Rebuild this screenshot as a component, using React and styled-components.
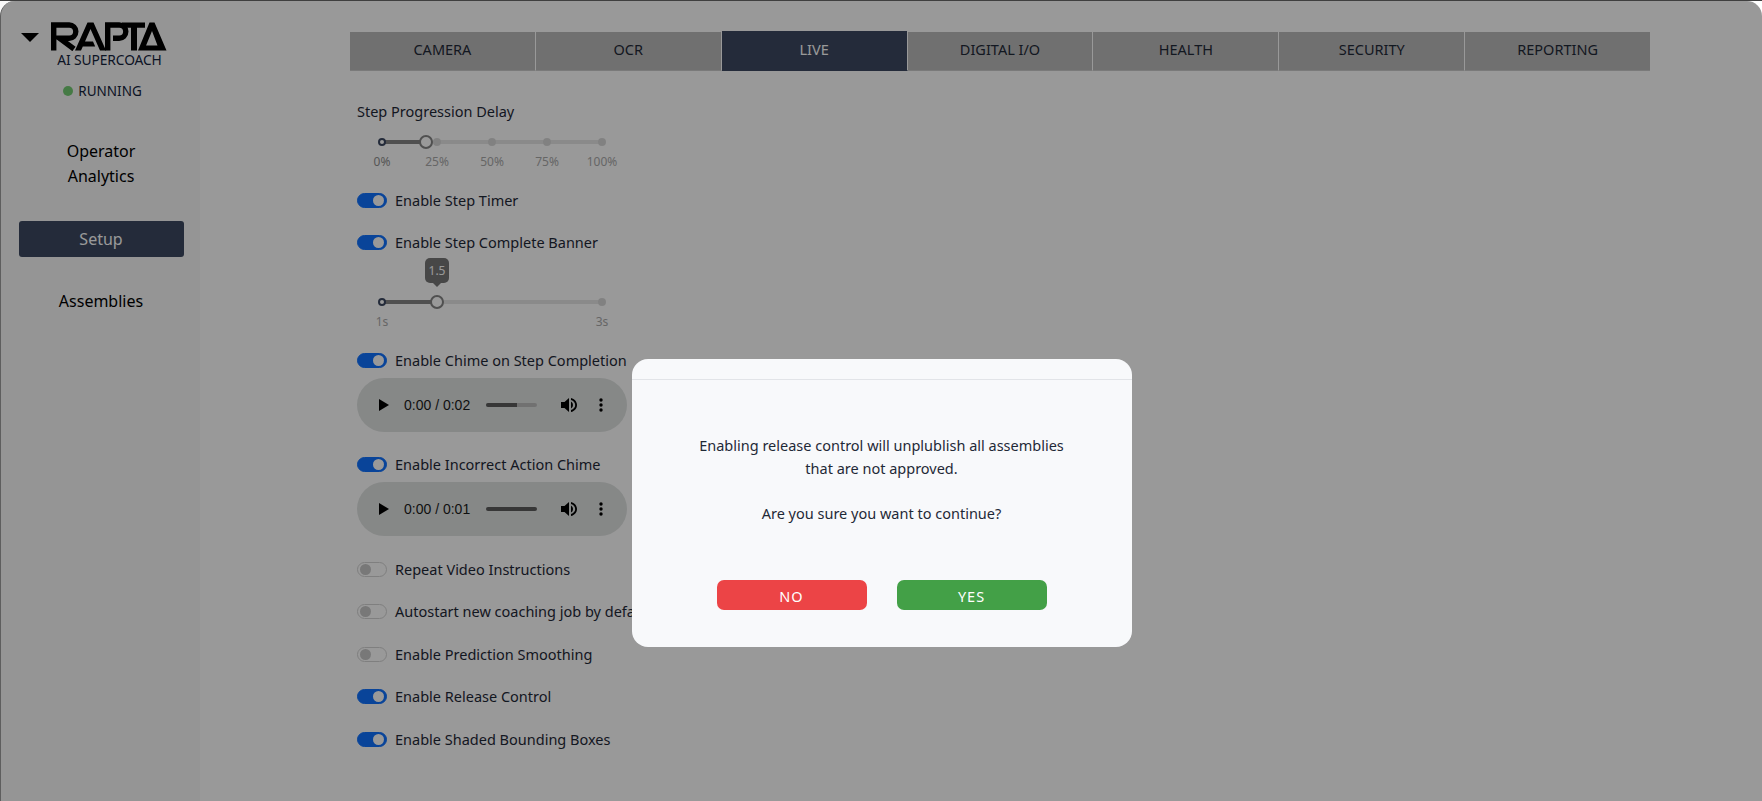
import React from "react";
import styled, { createGlobalStyle } from "styled-components";

const Global = createGlobalStyle`
  html, body { margin: 0; padding: 0; width: 100%; height: 100%; background: #fff; overflow: hidden; }
  body { font-family: "Noto Sans", "Open Sans", sans-serif; color: #111827; }
  * { box-sizing: border-box; }
`;

const Page = styled.div`
  position: relative;
  width: 1762px;
  height: 801px;
  display: flex;
  overflow: hidden;
  background: #fff;
  border-top: 1px solid #3f3f3f;
`;
const Sidebar = styled.aside`
  width: 200px;
  flex: none;
  padding-left: 2px;
  background: #f9f9f9;
  display: flex;
  flex-direction: column;
  align-items: center;
`;
const Brand = styled.div`
  width: 100%;
  display: flex;
  padding: 21px 0 0 19px;
  height: 50px;
  align-items: flex-start;
  gap: 12px;
`;
const Caret = styled.div`
  width: 0;
  height: 0;
  margin-top: 11px;
  border-left: 9px solid transparent;
  border-right: 9px solid transparent;
  border-top: 9px solid #000;
`;
const Tagline = styled.div`
  font-size: 13.8px;
  line-height: 18px;
  height: 18px;
  letter-spacing: -0.1px;
  color: #14233c;
  margin: 0 0 0 17px;
  width: 100%;
  text-align: center;
  white-space: nowrap;
`;
const Status = styled.div`
  display: flex;
  align-items: center;
  gap: 5px;
  margin: 12px 0 0 3px;
  font-size: 13.5px;
  line-height: 20px;
  color: #14233c;
`;
const Dot = styled.span`
  width: 10px;
  height: 10px;
  border-radius: 50%;
  background: #74cc74;
`;
const NavItem = styled.div`
  width: 165px;
  margin-top: ${(p) => p.$top}px;
  padding: ${(p) => (p.$active ? "6px" : "0")} 20px;
  height: ${(p) => (p.$active ? "36px" : "auto")};
  border-radius: 3px;
  text-align: center;
  font-size: 16px;
  line-height: 25px;
  background: ${(p) => (p.$active ? "#3c4961" : "transparent")};
  color: ${(p) => (p.$active ? "#fff" : "#000")};
`;
const Main = styled.main`
  flex: 1;
  padding: 30px 0 0 150px;
`;
const Tabs = styled.div`
  width: 1300px;
  height: 40px;
  display: flex;
  align-items: flex-end;
`;
const Tab = styled.div`
  flex: 1;
  height: ${(p) => (p.$active ? "40px" : "39px")};
  display: flex;
  align-items: center;
  justify-content: center;
  background: ${(p) => (p.$active ? "#3c4961" : "#bbb")};
  color: ${(p) => (p.$active ? "#fff" : "#1f2937")};
  border-right: 1px solid #fff;
  border-bottom: 1px solid ${(p) => (p.$active ? "#3c4961" : "#ccc")};
  font-size: 14.5px;
  padding-bottom: ${(p) => (p.$active ? "3px" : "5px")};
  &:last-child { border-right: none; }
`;
const Settings = styled.div`
  padding: 29px 0 0 7px;
  width: 500px;
`;
const Title = styled.div`
  font-size: 14.5px;
  line-height: 22px;
  margin-bottom: 1px;
  color: #1f2937;
  white-space: nowrap;
`;
const SliderBox = styled.div`
  position: relative;
  width: 220px;
  height: 50px;
  margin-left: 25px;
  margin-top: ${(p) => p.$top || 0}px;
`;
const Rail = styled.div`
  position: absolute;
  left: 0;
  right: 0;
  top: 17px;
  height: 4px;
  border-radius: 2px;
  background: #e6e6e6;
`;
const Fill = styled.div`
  position: absolute;
  left: 0;
  top: 0;
  height: 4px;
  border-radius: 2px;
  background: #858585;
`;
const Mark = styled.div`
  position: absolute;
  top: -2px;
  width: 8px;
  height: 8px;
  margin-left: -4px;
  border-radius: 50%;
  background: ${(p) => (p.$first ? "#fff" : "#d8d8d8")};
  border: 2px solid ${(p) => (p.$first ? "#3c4961" : "#d8d8d8")};
`;
const Handle = styled.div`
  position: absolute;
  top: -5px;
  width: 14px;
  height: 14px;
  margin-left: -7px;
  border-radius: 50%;
  background: #fff;
  border: 2px solid #858585;
`;
const MarkLabel = styled.div`
  position: absolute;
  top: 30px;
  transform: translateX(-50%);
  font-size: 12px;
  line-height: 18px;
  color: ${(p) => (p.$first ? "#8f8f8f" : "#aaa")};
  white-space: nowrap;
`;
const Tip = styled.div`
  position: absolute;
  top: -42px;
  width: 24px;
  height: 25px;
  margin-left: -12px;
  border-radius: 5px;
  background: #777;
  color: #fff;
  font-size: 12px;
  line-height: 25px;
  text-align: center;
  &::after {
    content: "";
    position: absolute;
    left: 8px;
    bottom: -4px;
    border-left: 4px solid transparent;
    border-right: 4px solid transparent;
    border-top: 4px solid #777;
  }
`;
const Row = styled.div`
  display: flex;
  align-items: center;
  gap: 8px;
  height: 22px;
  margin-top: ${(p) => p.$top || 0}px;
  font-size: 14.5px;
  color: #1f2937;
  white-space: nowrap;
`;
const Switch = styled.div`
  flex: none;
  width: 30px;
  height: 15px;
  border-radius: 8px;
  display: flex;
  align-items: center;
  justify-content: ${(p) => (p.$on ? "flex-end" : "flex-start")};
  padding: 0 2px;
  background: ${(p) => (p.$on ? "#0f72ff" : "#fff")};
  border: 1px solid ${(p) => (p.$on ? "#0f72ff" : "#d4d4d4")};
`;
const Knob = styled.div`
  width: 11px;
  height: 11px;
  border-radius: 50%;
  background: ${(p) => (p.$on ? "#fff" : "#c8c8c8")};
`;
const AudioBar = styled.div`
  width: 270px;
  height: 54px;
  margin-top: 7px;
  border-radius: 27px;
  background: #e0e3e2;
  display: flex;
  align-items: center;
  padding-left: 22px;
  color: #1b1b1b;
`;
const Time = styled.span`
  font-family: "Liberation Sans", Arial, sans-serif;
  font-size: 14px;
  width: 82px;
  margin-left: 15px;
  white-space: nowrap;
`;
const Progress = styled.div`
  width: 51px;
  height: 4px;
  border-radius: 2px;
  background: #bdbdbd;
  overflow: hidden;
`;
const ProgressFill = styled.div`
  height: 100%;
  background: #5c5c5c;
`;
const AudioIcons = styled.div`
  display: flex;
  align-items: center;
  gap: 22px;
  margin-left: 24px;
`;
const Backdrop = styled.div`
  position: absolute;
  inset: 0;
  display: flex;
  justify-content: center;
  align-items: flex-start;
  padding-top: 358px;
  background: rgba(0, 0, 0, 0.4);
  border-left: 1px solid #5e5e5e;
  border-radius: 15px 15px 0 0;
`;
const Modal = styled.div`
  width: 500px;
  height: 288px;
  background: #f8f9fb;
  border-radius: 16px;
  display: flex;
  flex-direction: column;
`;
const ModalHead = styled.div`
  height: 21px;
  flex: none;
  border-bottom: 1px solid #e2e4e8;
`;
const ModalBody = styled.div`
  padding-top: 54px;
  height: 200px;
  text-align: center;
  font-size: 14.5px;
  line-height: 22.5px;
  color: #1f2937;
`;
const ModalActions = styled.div`
  display: flex;
  justify-content: center;
  gap: 30px;
`;
const ActionButton = styled.button`
  width: 150px;
  height: 30px;
  border: none;
  border-radius: 7px;
  background: ${(p) => p.$bg};
  color: #fff;
  font-family: inherit;
  font-size: 14.5px;
  letter-spacing: 1px;
  padding: 1px 0 0;
`;

const Logo = () => (
  <svg width="116" height="29" viewBox="0 0 116 29" fill="none">
    <path d="M2.7 28.5V3h15.500a6.600 6.600 0 0 1 0 13.200H8.500L23 27" stroke="#000" strokeWidth="5.4" />
    <path d="M24 28.500 36.500.5h6L55 28.500h-6L39.500 7 34 19.500h8l2.200 5H31.800L30 28.500z" fill="#000" />
    <path d="M56.700 28.500V3h11.500a6.600 6.600 0 0 1 0 13.200H62" stroke="#000" strokeWidth="5.4" />
    <path d="M71 .5h23v5.300h-8V28.500h-6V5.800h-9z" fill="#000" />
    <path d="M87 28.500 98.500.5h5l12 28H91l2-5h13.500L101 9 93 28.500z" fill="#000" />
  </svg>
);

const Play = () => (
  <svg width="10" height="12" viewBox="0 0 10 12" fill="#000"><path d="M0 0v12l10-6z" /></svg>
);
const Volume = () => (
  <svg width="16" height="16" viewBox="0 0 16 16" fill="#000">
    <path d="M0 5v6h3.500L8 15V1L3.500 5z" />
    <path d="M10 4.400v7.200A4 4 0 0 0 12 8a4 4 0 0 0-2-3.600z" />
    <path d="M10 .9v2c2.600.8 4.200 2.800 4.200 5.100s-1.600 4.300-4.200 5.100v2c3.600-.9 6-3.700 6-7.100S13.600 1.800 10 .9z" />
  </svg>
);
const Kebab = () => (
  <svg width="4" height="14" viewBox="0 0 4 14" fill="#000">
    <circle cx="2" cy="2" r="1.700" /><circle cx="2" cy="7" r="1.700" /><circle cx="2" cy="12" r="1.700" />
  </svg>
);

const Slider = ({ value, marks, labels, top, tip }) => (
  <SliderBox $top={top}>
    <Rail>
      <Fill style={{ width: `${value}%` }} />
      {marks.map((m, i) => (
        <Mark key={m} $first={i === 0} style={{ left: `${m}%` }} />
      ))}
      <Handle style={{ left: `${value}%` }} />
      {tip && <Tip style={{ left: `${value}%` }}>{tip}</Tip>}
    </Rail>
    {labels.map((l, i) => (
      <MarkLabel key={l} $first={i === 0 && marks.length > 2} style={{ left: `${marks[i]}%` }}>
        {l}
      </MarkLabel>
    ))}
  </SliderBox>
);

const Toggle = ({ on = true, label, top }) => (
  <Row $top={top}>
    <Switch $on={on}><Knob $on={on} /></Switch>
    {label}
  </Row>
);

const Player = ({ time, pct }) => (
  <AudioBar>
    <Play />
    <Time>{time}</Time>
    <Progress><ProgressFill style={{ width: `${pct}%` }} /></Progress>
    <AudioIcons><Volume /><Kebab /></AudioIcons>
  </AudioBar>
);

const tabs = ["CAMERA", "OCR", "LIVE", "DIGITAL I/O", "HEALTH", "SECURITY", "REPORTING"];

export default function App() {
  return (
    <>
      <Global />
      <Page>
        <Sidebar>
          <Brand><Caret /><Logo /></Brand>
          <Tagline>AI SUPERCOACH</Tagline>
          <Status><Dot />RUNNING</Status>
          <NavItem $top={38}>Operator Analytics</NavItem>
          <NavItem $top={32} $active>Setup</NavItem>
          <NavItem $top={32}>Assemblies</NavItem>
        </Sidebar>
        <Main>
          <Tabs>
            {tabs.map((t) => <Tab key={t} $active={t === "LIVE"}>{t}</Tab>)}
          </Tabs>
          <Settings>
            <Title>Step Progression Delay</Title>
            <Slider value={20} marks={[0, 25, 50, 75, 100]} labels={["0%", "25%", "50%", "75%", "100%"]} />
            <Toggle top={16} label="Enable Step Timer" />
            <Toggle top={20} label="Enable Step Complete Banner" />
            <Slider top={30} value={25} tip="1.5" marks={[0, 100]} labels={["1s", "3s"]} />
            <Toggle top={16} label="Enable Chime on Step Completion" />
            <Player time="0:00 / 0:02" pct={60} />
            <Toggle top={21} label="Enable Incorrect Action Chime" />
            <Player time="0:00 / 0:01" pct={100} />
            <Toggle top={22} on={false} label="Repeat Video Instructions" />
            <Toggle top={20} on={false} label="Autostart new coaching job by default" />
            <Toggle top={21} on={false} label="Enable Prediction Smoothing" />
            <Toggle top={20} label="Enable Release Control" />
            <Toggle top={21} label="Enable Shaded Bounding Boxes" />
          </Settings>
        </Main>
        <Backdrop>
          <Modal>
            <ModalHead />
            <ModalBody>
              Enabling release control will unplublish all assemblies<br />
              that are not approved.<br /><br />
              Are you sure you want to continue?
            </ModalBody>
            <ModalActions>
              <ActionButton $bg="#ec4446">NO</ActionButton>
              <ActionButton $bg="#43a047">YES</ActionButton>
            </ModalActions>
          </Modal>
        </Backdrop>
      </Page>
    </>
  );
}
